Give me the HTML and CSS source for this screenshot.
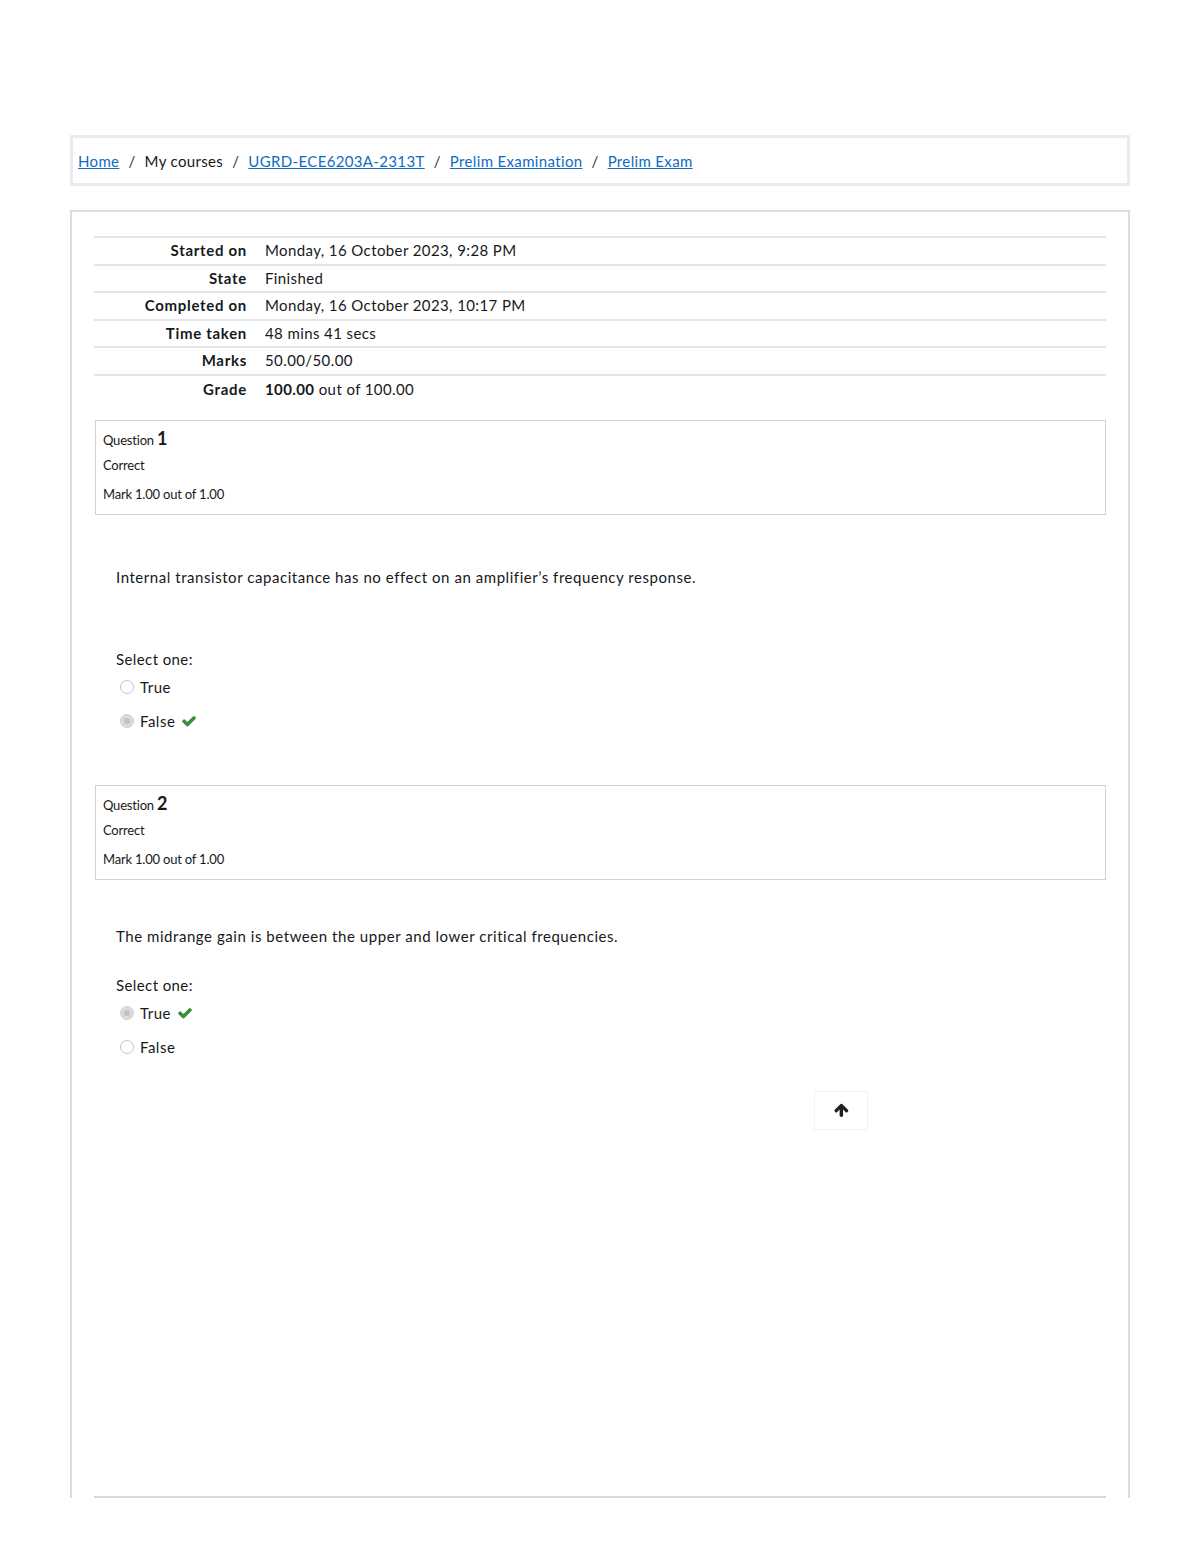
FILE: index.html
```html
<!DOCTYPE html>
<html>
<head>
<meta charset="utf-8">
<link rel="stylesheet" href="styles.css">
</head>
<body>
<div class="page">
  <nav class="crumbs">
    <a href="#">Home</a><span class="sep">/</span><span>My courses</span><span class="sep">/</span><a href="#">UGRD-ECE6203A-2313T</a><span class="sep">/</span><a href="#">Prelim Examination</a><span class="sep">/</span><a href="#">Prelim Exam</a>
  </nav>
  <main class="main">
    <table class="summary">
      <tr><th>Started on</th><td>Monday, 16 October 2023, 9:28 PM</td></tr>
      <tr><th>State</th><td>Finished</td></tr>
      <tr><th>Completed on</th><td>Monday, 16 October 2023, 10:17 PM</td></tr>
      <tr><th>Time taken</th><td>48 mins 41 secs</td></tr>
      <tr><th>Marks</th><td>50.00/50.00</td></tr>
      <tr class="last"><th>Grade</th><td><b>100.00</b> out of 100.00</td></tr>
    </table>

    <section class="question q1">
      <div class="info">
        <div class="qno">Question <span class="num">1</span></div>
        <div class="state">Correct</div>
        <div class="grade">Mark 1.00 out of 1.00</div>
      </div>
      <div class="content">
        <p class="qtext">Internal transistor capacitance has no effect on an amplifier’s frequency response.</p>
        <p class="prompt">Select one:</p>
        <div class="answer">
          <div class="opt"><span class="radio"></span><span>True</span></div>
          <div class="opt"><span class="radio checked"></span><span>False</span><svg class="tick" viewBox="0 0 1792 1792"><path d="M1671 566q0 40-28 68l-724 724-136 136q-28 28-68 28t-68-28l-136-136-362-362q-28-28-28-68t28-68l136-136q28-28 68-28t68 28l294 295 656-657q28-28 68-28t68 28l136 136q28 28 28 68z"/></svg></div>
        </div>
      </div>
    </section>

    <section class="question q2">
      <div class="info">
        <div class="qno">Question <span class="num">2</span></div>
        <div class="state">Correct</div>
        <div class="grade">Mark 1.00 out of 1.00</div>
      </div>
      <div class="content">
        <p class="qtext">The midrange gain is between the upper and lower critical frequencies.</p>
        <p class="prompt">Select one:</p>
        <div class="answer">
          <div class="opt"><span class="radio checked"></span><span>True</span><svg class="tick" viewBox="0 0 1792 1792"><path d="M1671 566q0 40-28 68l-724 724-136 136q-28 28-68 28t-68-28l-136-136-362-362q-28-28-28-68t28-68l136-136q28-28 68-28t68 28l294 295 656-657q28-28 68-28t68 28l136 136q28 28 28 68z"/></svg></div>
          <div class="opt"><span class="radio"></span><span>False</span></div>
        </div>
      </div>
    </section>

    <div class="totop-row">
      <a class="totop" href="#"><svg viewBox="0 0 1712 1792"><path d="M1675 971q0 51-37 90l-75 75q-38 38-91 38-54 0-90-38l-294-293v704q0 52-37.5 84.5t-90.5 32.5h-128q-53 0-90.5-32.5t-37.5-84.5v-704l-294 293q-36 38-90 38t-90-38l-75-75q-38-38-38-90 0-53 38-91l651-651q35-37 90-37 54 0 91 37l651 651q37 39 37 91z"/></svg></a>
    </div>
    <div class="spacer"></div>
    <div class="endline"></div>
  </main>
</div>
</body>
</html>
```
FILE: styles.css
```css
html, body {
  margin: 0;
  padding: 0;
  background: #fff;
}
body {
  font-family: "Lato", "Open Sans", sans-serif;
  color: #16191c;
  font-size: 15px;
}
.page {
  width: 1060px;
  margin-left: 70px;
  padding-top: 135px;
}
.crumbs {
  box-sizing: border-box;
  height: 51px;
  border: 3px solid #e9ecef;
  padding-left: 5px;
  display: flex;
  align-items: center;
  font-size: 15px;
  letter-spacing: 0.35px;
}
.crumbs a {
  color: #0f6cbf;
  text-decoration: underline;
}
.crumbs .sep {
  margin: 0 9px;
  color: #333;
}
.main {
  box-sizing: border-box;
  margin-top: 24px;
  height: 1288px;
  border: 2px solid #dedede;
  border-bottom: none;
  padding: 24px 22px 0 22px;
  display: flex;
  flex-direction: column;
}
.summary {
  width: 100%;
  border-collapse: collapse;
}
.summary th, .summary td {
  border-top: 2px solid #e3e6e9;
  padding: 0;
  height: 25.6px;
  vertical-align: middle;
  line-height: 25.6px;
  letter-spacing: 0.4px;
}
.summary tr.last th, .summary tr.last td {
  padding-top: 1px;
}
.summary th {
  width: 153px;
  text-align: right;
  padding-right: 18px;
  font-weight: 700;
  letter-spacing: 0.7px;
}
.summary td {
  text-align: left;
}
.question .info {
  box-sizing: border-box;
  margin-left: 1px;
  height: 95px;
  border: 1px solid #cfd3d7;
  padding: 6px 7px;
  font-size: 13px;
  letter-spacing: -0.2px;
}
.q1 .info { margin-top: 17px; }
.q2 .info { margin-top: 47px; }
.qno {
  height: 24px;
  line-height: 22px;
}
.qno .num {
  font-size: 18px;
  font-weight: 700;
}
.state {
  height: 28px;
  line-height: 28px;
}
.grade {
  line-height: 30px;
}
.content {
  padding-left: 22px;
}
.qtext {
  margin: 0;
  line-height: 22px;
  letter-spacing: 0.55px;
}
.q1 .qtext { margin-top: 51px; }
.q2 .qtext { margin-top: 45px; }
.prompt {
  margin: 0;
  line-height: 22px;
  letter-spacing: 0.4px;
}
.q1 .prompt { margin-top: 60px; }
.q2 .prompt { margin-top: 27px; }
.answer {
  padding-left: 4px;
}
.opt {
  display: flex;
  align-items: center;
  height: 34px;
  gap: 6px;
  letter-spacing: 0.5px;
}
.radio {
  box-sizing: border-box;
  width: 14px;
  height: 14px;
  border-radius: 50%;
  border: 1px solid #c4c4c4;
  background: #fff;
}
.radio.checked {
  background: radial-gradient(circle, #c4c4c4 0 3px, #dcdcdc 3.5px);
  border-color: #d0d0d0;
}
.tick {
  width: 16px;
  height: 16px;
  fill: #3c8c3c;
  margin-left: 0;
}
.totop-row {
  margin-top: 27px;
  padding-left: 720px;
}
.totop {
  box-sizing: border-box;
  display: flex;
  align-items: center;
  justify-content: center;
  width: 54px;
  height: 39px;
  border: 1px solid #f2f2f2;
}
.totop svg {
  width: 16px;
  height: 16px;
  fill: #1d2125;
}
.spacer { flex: 1; }
.endline {
  height: 2px;
  background: #d6dbe0;
}
```
